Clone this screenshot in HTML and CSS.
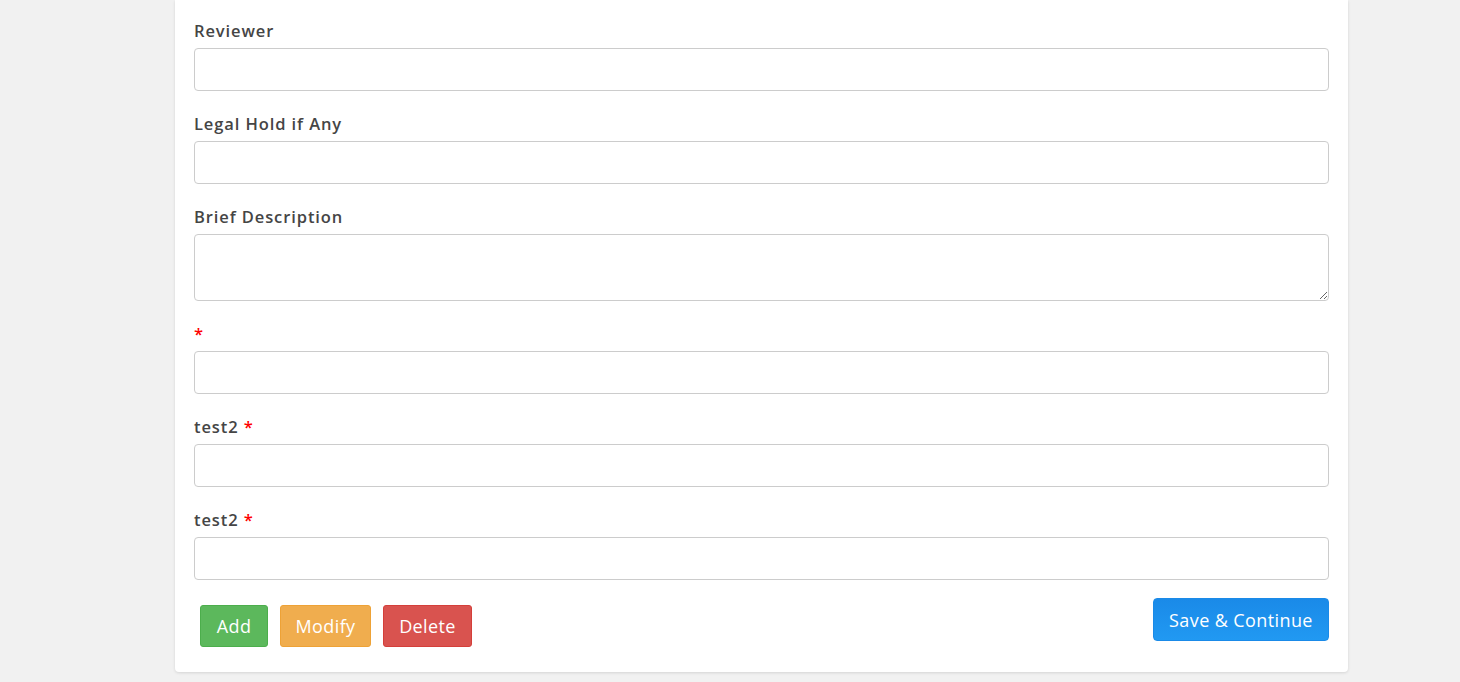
FILE: index.html
```html
<!DOCTYPE html>
<html lang="en">
<head>
<meta charset="utf-8">
<title>Form</title>
<link rel="stylesheet" href="styles.css">
</head>
<body>
<div class="page">
  <div class="card">
    <div class="form-group">
      <label class="label">Reviewer</label>
      <input class="control" type="text">
    </div>
    <div class="form-group">
      <label class="label">Legal Hold if Any</label>
      <input class="control" type="text">
    </div>
    <div class="form-group">
      <label class="label">Brief Description</label>
      <textarea class="control area"></textarea>
    </div>
    <div class="form-group">
      <label class="label"><span class="req">*</span></label>
      <input class="control" type="text">
    </div>
    <div class="form-group">
      <label class="label">test2 <span class="req">*</span></label>
      <input class="control" type="text">
    </div>
    <div class="form-group form-group-last">
      <label class="label">test2 <span class="req">*</span></label>
      <input class="control" type="text">
    </div>
    <div class="actions">
      <div class="left-actions">
        <button class="btn btn-add">Add</button>
        <button class="btn btn-modify">Modify</button>
        <button class="btn btn-delete">Delete</button>
      </div>
      <button class="btn btn-save">Save &amp; Continue</button>
    </div>
  </div>
</div>
</body>
</html>
```

FILE: styles.css
```css
html, body {
  margin: 0;
  padding: 0;
  background: #f1f1f1;
  font-family: "Open Sans", "Liberation Sans", sans-serif;
}

.page {
  padding-left: 175px;
  padding-bottom: 10px;
}

.card {
  width: 1173px;
  box-sizing: border-box;
  background: #fff;
  padding: 19px 19px 25px 19px;
  border-radius: 0 0 4px 4px;
  box-shadow: 0 1px 3px rgba(0, 0, 0, 0.12);
}

.form-group {
  display: flex;
  flex-direction: column;
  margin-bottom: 21px;
}

.form-group-last {
  margin-bottom: 18px;
}

.label {
  display: block;
  font-size: 16.5px;
  font-weight: 600;
  line-height: 24px;
  height: 22px;
  margin-bottom: 7px;
  color: #454545;
  letter-spacing: 0.9px;
}

.req {
  color: #ff0000;
}

.control {
  display: block;
  width: 100%;
  box-sizing: border-box;
  height: 43px;
  border: 1px solid #cccccc;
  border-radius: 4px;
  background: #fff;
  margin: 0;
  padding: 6px 12px;
  font-family: inherit;
  font-size: 15px;
}

.area {
  height: 67px;
  resize: vertical;
}

.actions {
  display: flex;
  justify-content: space-between;
  align-items: flex-start;
}

.left-actions {
  display: flex;
  gap: 12px;
  padding-left: 6px;
  padding-top: 7px;
}

.btn {
  font-family: inherit;
  font-size: 18px;
  font-weight: 400;
  letter-spacing: 0.4px;
  color: #fff;
  height: 42px;
  border-radius: 3px;
  border: 1px solid transparent;
  padding: 0 4px;
  cursor: pointer;
}

.btn-add {
  width: 68px;
  background: #5cb85c;
  border-color: #4cae4c;
}

.btn-modify {
  width: 91px;
  background: #f0ad4e;
  border-color: #eea236;
}

.btn-delete {
  width: 89px;
  background: #d9534f;
  border-color: #d43f3a;
}

.btn-save {
  width: 176px;
  height: 43px;
  background: linear-gradient(#1a8ae8, #2199f2);
  border-color: #1a8ae8;
  border-radius: 4px;
  padding: 0 4px;
}
```
